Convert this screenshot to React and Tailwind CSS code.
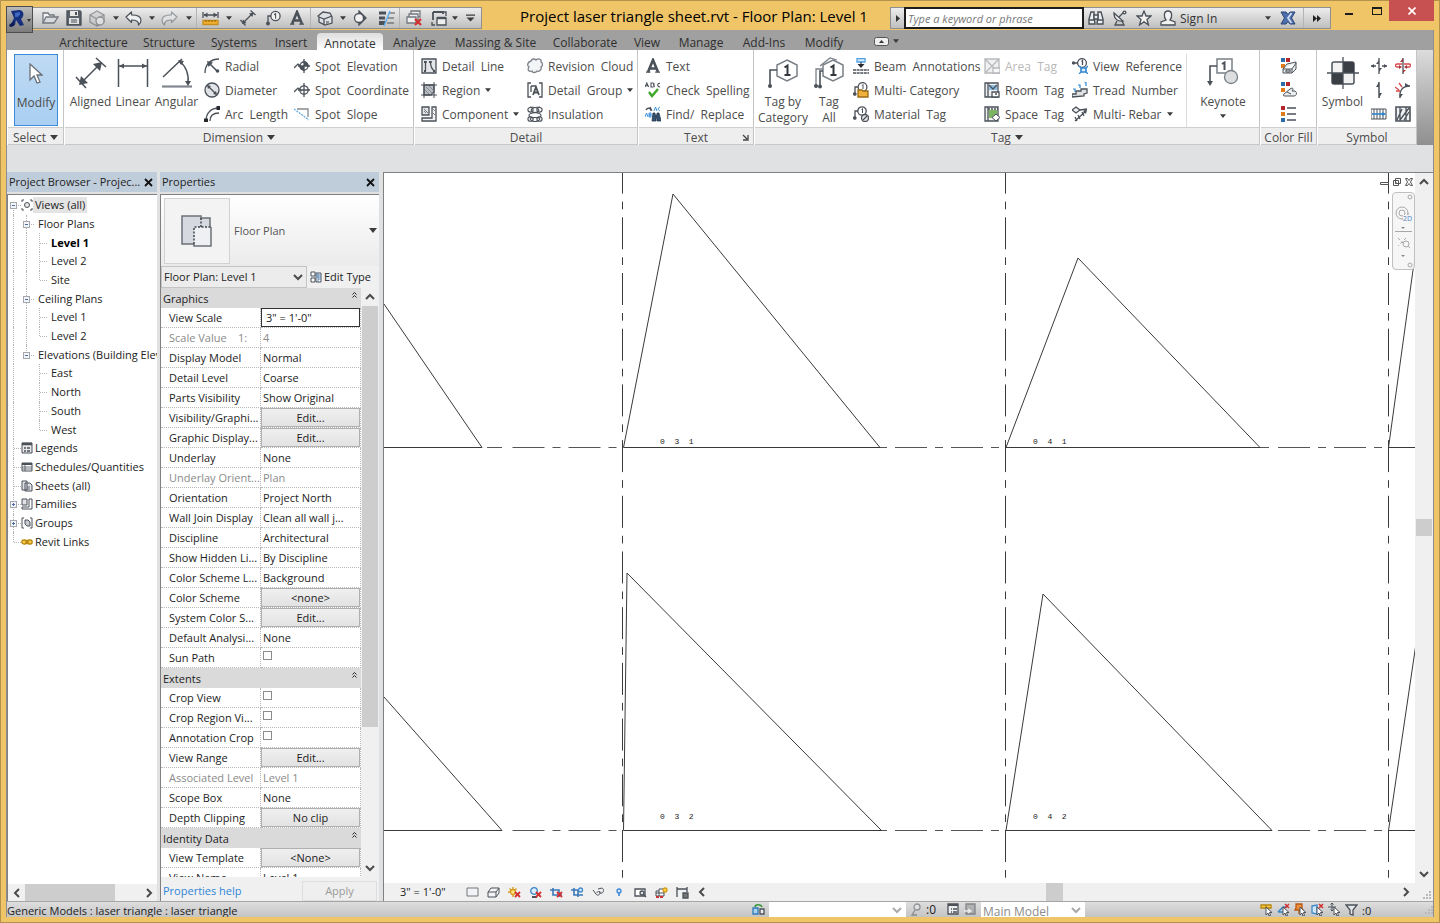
import React from "react";

const INK = "#4b5159";

function Icon({ size = 16, box = 16, children, className = "" }) {
  return (
    <svg width={size} height={size} viewBox={`0 0 ${box} ${box}`} fill="none" stroke={INK} strokeWidth="1.3" className={`shrink-0 ${className}`} aria-hidden="true">
      {children}
    </svg>
  );
}

const Caret = ({ big }) => (
  <svg width={big ? 8 : 6} height={big ? 5 : 4} viewBox="0 0 8 5" className="shrink-0" aria-hidden="true">
    <path d="M0 0h8L4 5z" fill="#3c3c3c" />
  </svg>
);

const CHEVRONS = { up: "M1 7l4-4 4 4", down: "M1 3l4 4 4-4", left: "M7 1L3 5l4 4", right: "M3 1l4 4-4 4" };
const Chevron = ({ dir, color = "#4a4a4a" }) => (
  <svg width="10" height="10" viewBox="0 0 10 10" fill="none" stroke={color} strokeWidth="2" className="shrink-0" aria-hidden="true">
    <path d={CHEVRONS[dir]} />
  </svg>
);

/* ---------- quick access icons ---------- */

const OpenIcon = () => (
  <Icon size={18} box={18}>
    <path d="M2 14V4h5l1.500 2H13v2" fill="#f4f4f4" stroke="#73787f" />
    <path d="M2 14L5 8h12l-4 6z" fill="#d8dadd" stroke="#73787f" />
  </Icon>
);
const SaveIcon = () => (
  <Icon>
    <path d="M1 1h13l1 1v13H1z" fill="#5a6068" />
    <path d="M4 1h8v5H4z" fill="#e8e8e8" stroke="none" />
    <path d="M9 2h2v3H9z" fill="#4b5159" stroke="none" />
    <path d="M3 8h10v6H3z" fill="#dfe1e4" stroke="none" />
    <path d="M5 10h6M5 12h6" strokeWidth="1" />
  </Icon>
);
const SyncIcon = () => (
  <Icon size={17} box={17} className="opacity-50">
    <path d="M1 5l7-4 7 4v7l-7 4-7-4z" fill="#ccc" />
    <path d="M1 5l7 4 7-4M8 9v7" />
    <circle cx="11" cy="11" r="4" fill="#eee" />
  </Icon>
);
const UndoIcon = ({ redo }) => (
  <svg width="17" height="15" viewBox="0 0 17 15" aria-hidden="true" className={redo ? "opacity-45 -scale-x-100" : ""}>
    <path d="M1 6L6.500 1v2.800c6 0 9.500 1.700 9.500 5.700 0 2-1 3-2.500 4.500.5-3.500-2-5-7-5V11.500z" fill="#eef0f2" stroke={INK} strokeWidth="1.200" strokeLinejoin="round" />
  </svg>
);
const MeasureIcon = () => (
  <Icon size={17} box={17}>
    <path d="M1 2v6M16 2v6M2 5h13" />
    <path d="M1.500 5l4-2.500v5zM15.500 5l-4-2.500v5z" fill={INK} stroke="none" />
    <path d="M1 10.500h15v4H1z" fill="#f0b030" stroke="#c98e1c" />
    <path d="M4 10v2M7 10v2M10 10v2M13 10v2" stroke="#8a5c0c" strokeWidth="1" />
  </Icon>
);
const AlignedIcon = ({ size = 16 }) => (
  <svg width={size} height={size} viewBox="0 0 32 32" fill="none" stroke={INK} strokeWidth={size > 20 ? 1.5 : 2.6} className="shrink-0" aria-hidden="true">
    <path d="M6 26L25 7M1 20l10 11M21 1l10 9" />
    <path d="M4 28l2-9 7 7zM27 5l-9 2 7 7z" fill={INK} stroke="none" />
  </svg>
);
const TagSmallIcon = () => (
  <Icon>
    <circle cx="10.500" cy="6" r="4.600" fill="#f4f4f4" />
    <path d="M6 6H3v7" />
    <circle cx="3" cy="13.500" r="1.300" fill={INK} />
    <path d="M9 4.800l1.600-1v5" strokeWidth="1.100" />
  </Icon>
);
const LetterA = ({ size = 16 }) => (
  <Icon size={size}>
    <path d="M3 14L8 2l5 12M4.600 10.500h6.800" strokeWidth="2.600" />
    <path d="M1 14.200h4.400M10.200 14.200H15" strokeWidth="1.300" />
  </Icon>
);
const HouseIcon = () => (
  <Icon>
    <path d="M1 6l5-4 7 1 2 4v6l-7 2-6-3V7z" fill="#dfe1e4" />
    <path d="M2 7l5 2 8-3M7 9v6" />
    <path d="M9 11h3v3H9z" fill="#8b9097" stroke="none" />
  </Icon>
);
const SectionIcon = () => (
  <Icon>
    <path d="M7 1v14l7-7z" fill={INK} />
    <circle cx="7" cy="8" r="4.500" fill="#f2f2f2" />
  </Icon>
);
const ThinLinesIcon = () => (
  <Icon size={17} box={17}>
    <path d="M1 3h7M1 8h6" strokeWidth="3" />
    <path d="M1 13h6" strokeWidth="4" />
    <path d="M11 3h6M10 8h6M9 13h7" strokeWidth="1" />
    <path d="M12 1L6 16" stroke="#5aa9ea" strokeWidth="1.400" />
  </Icon>
);
const CloseViewsIcon = () => (
  <Icon>
    <path d="M5 1h9v6H5z" fill="#eee" stroke="#73787f" />
    <path d="M3 4h9v6H3z" fill="#eee" stroke="#73787f" />
    <path d="M1 7h9v6H1z" fill="#eee" stroke="#73787f" />
    <path d="M9 9l6 6M15 9l-6 6" stroke="#d22f2f" strokeWidth="2.200" />
  </Icon>
);
const SwitchIcon = () => (
  <Icon size={17} box={17}>
    <path d="M2 2h10v2M2 2v8" strokeWidth="1.800" />
    <path d="M6 8h9v7H6z" fill="#eee" />
    <path d="M6 8h9" strokeWidth="2.400" />
    <path d="M15 6V2h-2M1 12v3h3" />
  </Icon>
);
const BinocularsIcon = () => (
  <Icon>
    <path d="M3 2h3v4l1 8H1V9zM13 2h-3v4l-1 8h6V9z" fill="#eef0f2" strokeWidth="1.400" />
    <path d="M6 5h4v4H6zM1 10h6M9 10h6" fill="#eef0f2" strokeWidth="1.400" />
  </Icon>
);
const DishIcon = () => (
  <Icon>
    <path d="M2 3c0 6 4 9 9 8z" fill="#eee" />
    <path d="M7 7l5-5M5 11l-2 4h9l-2-4" />
    <circle cx="12.500" cy="2.500" r="1.400" fill="#eee" />
  </Icon>
);
const StarIcon = () => (
  <Icon>
    <path d="M8 1l2 5h5l-4 3.500 1.500 5.500L8 11.800l-4.500 3.200L5 9.500 1 6h5z" fill="#f2f2f2" />
  </Icon>
);
const PersonIcon = () => (
  <Icon>
    <path d="M8 1c5 0 4 7 2 9l5 2v3H1v-3l5-2C4 8 3 1 8 1z" fill="#f2f2f2" />
  </Icon>
);
const ExchangeIcon = () => (
  <Icon>
    <path d="M1 2h5l2 2.500L10 2h5l-3.500 6 3.500 6h-5l-2-2.500L6 14H1l3.500-6z" fill="#4d6fae" stroke="#2a4474" strokeWidth="1" />
    <path d="M11.500 3L8 8l3.500 5" stroke="#cfdcf2" strokeWidth="1.800" />
  </Icon>
);

/* ---------- ribbon icons ---------- */

const LinearIcon = () => (
  <Icon size={32} box={32}>
    <path d="M1.500 2v28M30.500 2v28M2 9h28" strokeWidth="1.500" />
    <path d="M2 9l5-2.500v5zM30 9l-5-2.500v5z" fill={INK} stroke="none" />
  </Icon>
);
const AngularIcon = () => (
  <Icon size={32} box={32}>
    <path d="M2 20L21 2M18 4c7 5 10 13 9 23" strokeWidth="1.500" />
    <path d="M1 29.500h30" strokeWidth="2.200" stroke="#80868d" />
    <path d="M17 3l6 1-3 4zM27 29l-3-5h6z" fill={INK} stroke="none" />
  </Icon>
);
const RadialIcon = () => (
  <Icon><path d="M1 15C1 7 6 1 15 1" /><path d="M5 5l8 8" strokeWidth="1.600" /><path d="M3 3l6 1.500L4.500 9z" fill={INK} stroke="none" /><circle cx="13.500" cy="13" r="1.800" fill={INK} stroke="none" /></Icon>
);
const DiameterIcon = () => (
  <Icon><circle cx="8" cy="8" r="7" fill="#e2e3e6" /><path d="M4 4l8 8" /><path d="M3 3l4 1-3 3zM13 13l-4-1 3-3z" fill={INK} stroke="none" /></Icon>
);
const ArcIcon = () => (
  <Icon><path d="M2 15C2 7 7 2 15 2M6 15c0-5 3-8 9-8" /><path d="M0 12.500h4v3.500H0zM12.500 0H16v4h-3.500z" fill="#26292d" stroke="none" /></Icon>
);
const SpotElevIcon = () => (
  <Icon><path d="M0 10l4-4 4 3M10 1v14M4 8h12" /><circle cx="10" cy="8" r="4" fill="#fff" /><path d="M10 4a4 4 0 014 4h-4zM10 12a4 4 0 01-4-4h4z" fill={INK} stroke={INK} /></Icon>
);
const SpotCoordIcon = () => (
  <Icon><path d="M0 10l4-4 4 3M10 1v14M4 8h12" /><circle cx="10" cy="8" r="4.200" /></Icon>
);
const SlopeIcon = () => (
  <Icon><path d="M3 3h11v8" stroke="#848a90" /><path d="M0 3l15 11" stroke="#67a8dc" strokeDasharray="2 1" /></Icon>
);
const DetailLineIcon = () => (
  <Icon><path d="M1 1h14v14H1z" fill="#e3e5e8" /><path d="M3 4h3M4.500 4v9M8 4h3M9.500 4c0 5 1 7 4 9" /><path d="M3 3h2v2H3zM3 12h2v2H3zM8 3h2v2H8zM12 12h2v2h-2z" fill={INK} stroke="none" /></Icon>
);
const RegionIcon = () => (
  <Icon><path d="M3 3h10v7l-3 3H3z" fill="#b9bdc2" /><path d="M0 3h16M3 0v16M13 0v16M0 13h16" strokeWidth="1" /><path d="M5 5l7 7M8 4l5 5M4 8l4 4" stroke="#777d84" strokeWidth=".8" /></Icon>
);
const ComponentIcon = () => (
  <Icon><path d="M1 1h7v8H1z" fill="#e1e3e6" /><path d="M11 1h4v14H1v-3h10z" fill="#f4f4f4" /><path d="M3 3l4 4M3 5l2 2M12 3l2 2M12 7l2 2" strokeWidth=".7" /></Icon>
);
const CloudIcon = () => (
  <Icon><path d="M4 3c1-3 4-2 5-1 2-2 6-1 5 2 2 1 2 4 0 5 1 3-2 5-4 4-1 2-5 2-5 0-3 1-5-1-3-4-2-1-2-5 2-6z" fill="#f3f4f5" stroke="#7c828a" /></Icon>
);
const GroupIcon = () => (
  <Icon><path d="M4 1H1v14h3M12 1h3v14h-3M4 4h5M4 4v6" /><path d="M6 13l3-8 3 8M7.300 10.500H11" strokeWidth="1.800" /></Icon>
);
const InsulationIcon = () => (
  <Icon>
    <path d="M3 1c9 0 12 4.500 5 5.500-8 1-8 5 0 5s5 4-2 4M13 1C4 1 1 5.500 8 6.500c8 1 8 5 0 5s-5 4 2 4" strokeWidth="1.100" />
    <ellipse cx="3.500" cy="3.800" rx="2.600" ry="2.300" strokeWidth="1.100" /><ellipse cx="12.500" cy="3.800" rx="2.600" ry="2.300" strokeWidth="1.100" />
    <ellipse cx="3.500" cy="13" rx="2.600" ry="2.300" strokeWidth="1.100" /><ellipse cx="12.500" cy="13" rx="2.600" ry="2.300" strokeWidth="1.100" />
  </Icon>
);
const CheckIcon = () => (
  <Icon><path d="M0 5l1.800-4 1.800 4M.8 3.800h2M6 1v4h2c2 0 1.500-2 0-2 1.500 0 1.500-2 0-2zM15 1.500c-3-1-3 4 0 3.300" strokeWidth="1.100" /><path d="M4 10l3 4 6-7" stroke="#3fa52b" strokeWidth="2.400" /></Icon>
);
const FindIcon = () => (
  <Icon><path d="M1 4c1-2 3-2 5-1l-1-2M5 4h2" /><path d="M9 5l1.500-4L12 5M15 1.500c-2-1-2.500 3.500 0 3M0 11l1.500-4L3 11M4 7v4h2V9H4h2V7z" stroke="#3a8fdb" strokeWidth="1" /><path d="M8 7h2v2h2V7h2l2 8h-4v-3h-1v3H7z" fill="#34506f" stroke="#24384f" strokeWidth=".8" /></Icon>
);
const Hexagon = ({ shadow }) => (
  <Icon size={32} box={32}>
    {shadow && <path d="M7 9L17 1l7 2M3 28V12h8M3 12v0" stroke="#7a8087" />}
    <path d="M20 3l10 5v11l-10 5-10-5V8z" fill="#fff" stroke="#7a8087" strokeWidth="1.500" />
    <path d={shadow ? "M10 14H7v14" : "M10 13H3v16"} strokeWidth="1.600" />
    <circle cx="3" cy="29" r="2" fill={INK} stroke="none" />
    {shadow && <circle cx="7" cy="29.500" r="2" fill={INK} stroke="none" />}
    <path d="M17.500 10.500l3-2V18M17.500 18h6" strokeWidth="2" stroke="#33383e" />
  </Icon>
);
const BeamIcon = () => (
  <Icon><path d="M4 .7h8v3.300H4z" stroke="#4ea0e6" fill="#d7ebfb" /><path d="M8 4v5" /><path d="M4.500 6h7L8 10z" fill="#26292d" stroke="none" /><path d="M0 12h16M0 15h16" strokeWidth="1.600" strokeDasharray="3 .6" /></Icon>
);
const MultiCatIcon = () => (
  <Icon><circle cx="9.500" cy="5" r="4.400" fill="#fff" /><path d="M5 5H2v7" /><circle cx="1.800" cy="12" r="1.200" fill={INK} /><path d="M9 3.500l1-1V7" strokeWidth="1" /><path d="M5 8h4l1 1h5v6H5z" fill="#f0b23c" stroke="#9a6a14" /></Icon>
);
const MaterialIcon = () => (
  <Icon><circle cx="9" cy="5" r="4.200" fill="#fff" /><path d="M5 5H2v7" /><circle cx="1.800" cy="12" r="1.200" fill={INK} /><path d="M8.500 3.500l1-1V7" strokeWidth="1" /><circle cx="12" cy="12" r="3.500" fill="#e8e8e8" /><path d="M10 14l4-4" /></Icon>
);
const AreaTagIcon = () => (
  <Icon className="opacity-40"><path d="M1 1h14v14H1z" fill="#ddd" /><path d="M1 1l14 14M15 1L1 15" /><path d="M9 10h7v5H9z" fill="#eee" /></Icon>
);
const RoomTagIcon = () => (
  <Icon><path d="M1 1h13v14H1zM4 1v14" fill="#eef0f2" /><path d="M5 3h8v5H5z" fill="#8cc0e8" stroke="none" /><path d="M5 3l4 4 4-4" /><path d="M8 10h7v5H8z" fill="#fff" /><path d="M11 12h2" /></Icon>
);
const SpaceTagIcon = () => (
  <Icon><path d="M1 1h13v14H1zM4 1v14" fill="#f0f2ef" /><path d="M5 4h8v8H5z" fill="#7cb661" stroke="none" /><path d="M4 3h10" strokeDasharray="2 1" /><path d="M12 8l4 3.500-4 3.500-4-3.500z" fill="#fff" strokeWidth="1" /></Icon>
);
const ViewRefIcon = () => (
  <Icon><circle cx="10" cy="5" r="4.400" fill="#fff" /><path d="M0 5h6M9.500 3.500l1-1V7" /><circle cx="1.500" cy="5" r="1" fill={INK} /><path d="M9 10h5v4H9z" stroke="#3187d2" fill="#dceefb" strokeWidth="1.600" /><path d="M7 8l2 2M16 8l-2 2M7 16l2-2M16 16l-2-2" stroke="#3187d2" /></Icon>
);
const TreadIcon = () => (
  <Icon><path d="M0 15v-3h4V9h5V7h6v4l-3 1v2z" fill="#e1e3e6" /><path d="M1 7h2v3M6 3h2v3M12 0h2v4" stroke="#3187d2" strokeWidth="1.200" /></Icon>
);
const RebarIcon = () => (
  <Icon><path d="M4 1l4 3-4 3-4-3z" fill="#eee" /><path d="M3 15L14 5M3 11l2 4M6 9l2 4M10 6l2 4M8 4l7-1" /><path d="M15 3l-4 2 3 3z" fill={INK} stroke="none" /></Icon>
);
const KeynoteIcon = () => (
  <Icon size={32} box={32}>
    <path d="M10 2h15v14H10z" fill="#fff" stroke="#7a8087" strokeWidth="1.500" /><path d="M10 9H3v18" strokeWidth="1.600" /><path d="M0 24h6l-3 5z" fill={INK} stroke="none" /><path d="M15 7l2.500-1.500V13" strokeWidth="2" /><circle cx="24" cy="20" r="6.500" fill="#dcdee0" stroke="#7a8087" />
  </Icon>
);
const Squares = ({ kind }) => (
  <Icon>
    <path d="M0 0h4v4H0z" fill={kind === "legend" ? "#b3262c" : "#2c6da8"} stroke="none" />
    {kind !== "legend" && <path d="M5 0h4v4H5z" fill="#b3262c" stroke="none" />}
    <path d="M0 6h4v4H0z" fill="#e07b1c" stroke="none" />
    {kind === "legend" && <><path d="M0 12h4v4H0z" fill="#2c6da8" stroke="none" /><path d="M6 2h9M6 8h9M6 14h9" /></>}
    {kind === "duct" && <path d="M2 11l4-5 9-2v7l-4 4H2zM2 11h9l4-6M11 11v4M5 12h4v2H5z" fill="#eceef0" strokeWidth="1" />}
    {kind === "pipe" && <path d="M3 12l6-5c3-2 4 0 2 2h3c3 2 1 5-1 5H4c-2 0-2-1-1-2zM6 10l4 2" fill="#eceef0" strokeWidth="1" />}
  </Icon>
);
const SymbolIcon = () => (
  <Icon size={32} box={32}>
    <rect x="5" y="5" width="22" height="22" rx="2" fill="#f2f2f2" strokeWidth="1.500" />
    <path d="M16 5h9a2 2 0 012 2v9H16zM5 16h11v11H7a2 2 0 01-2-2z" fill="#3a3f46" stroke="none" />
    <path d="M16 0v32M0 16h32" strokeWidth="1.300" />
  </Icon>
);
const SpanIcon = () => (
  <Icon><path d="M8 0v16M0 8h5M11 8h5" /><path d="M0 8l3-2v4zM16 8l-3-2v4zM8 2l-3 4h3zM8 14l3-4H8z" fill={INK} stroke="none" /></Icon>
);
const RedSpanIcon = () => (
  <Icon><path d="M8 0v16" /><path d="M7 6H2c-2 0-2 3 0 3h3M9 6h5c2 0 2 3 0 3h-3" stroke="#d8474b" /><path d="M4 7v4l3-2zM12 7v4l-3-2zM8 0L5 4h3zM8 15l3-3H8z" fill="#a33a3e" stroke="none" /></Icon>
);
const ArrowUpDownIcon = () => (
  <Icon><path d="M8 0v16" strokeWidth="1.500" /><path d="M8 0L5 5h3zM8 16l3-5H8z" fill={INK} stroke="none" /></Icon>
);
const BentIcon = () => (
  <Icon><path d="M5 16c-1-7 2-12 10-12" /><path d="M10 1l5 3h-5zM5 16l3-4H5z" fill={INK} stroke="none" /><path d="M0 5l4 3M4 1l3 4M1 9h4" stroke="#d8474b" /></Icon>
);
const PathIcon = () => (
  <Icon><path d="M0 3h15v10H0zM3 3v10M6 3v10M9 3v10M12 3v10" strokeWidth="1" /><path d="M1 8h13" stroke="#2e82cc" strokeWidth="1.600" /><path d="M15 8l-4-2v4z" fill="#2e82cc" stroke="none" /></Icon>
);
const FabricIcon = () => (
  <Icon><path d="M1 1h14v14H1z" fill="#eef0f2" strokeWidth="1.600" /><path d="M5 1v14M11 1v14M2 14L7 3M5 14L14 2M9 14l5-8" /></Icon>
);
const CursorIcon = () => (
  <svg width="14" height="22" viewBox="0 0 14 22" aria-hidden="true">
    <path d="M1 1v16l4-4 3 7 3-1-3-7h5z" fill="#fff" stroke="#6a7076" strokeWidth="1.300" />
  </svg>
);

/* ---------- ribbon ---------- */

const TABS = [
  ["Architecture", "w-[83px]"], ["Structure", "w-[68px]"], ["Systems", "w-[62px]"], ["Insert", "w-[52px]"],
  ["Annotate", "w-[66px]"], ["Analyze", "w-[63px]"], ["Massing & Site", "w-[99px]"], ["Collaborate", "w-[80px]"],
  ["View", "w-[44px]"], ["Manage", "w-[64px]"], ["Add-Ins", "w-[62px]"], ["Modify", "w-[58px]"],
];

function Panel({ title, width, caret, launcher, children }) {
  return (
    <section className={`flex shrink-0 flex-col border-l border-r border-l-white border-r-[#c4c5c6] bg-white ${width}`} aria-label={title}>
      <div className="flex h-[77px] pt-1">{children}</div>
      <div className="relative flex h-[18px] items-center justify-center gap-1 border-t border-b border-t-[#cfcfcf] border-b-[#c8c8c8] bg-[#eeeeee] pt-[3px] text-[#4c4c4c]">
        {title}
        {caret && <Caret big />}
        {launcher && (
          <button className="absolute right-1" aria-label="Text types">
            <svg width="7" height="7" viewBox="0 0 7 7" fill="none" stroke="#444" strokeWidth="1.300" aria-hidden="true"><path d="M1 1l4 4M6 1v5H1" /></svg>
          </button>
        )}
      </div>
    </section>
  );
}

function Col({ className = "", children }) {
  return <div className={`flex shrink-0 flex-col ${className}`}>{children}</div>;
}

function Small({ icon, label, caret, disabled }) {
  return (
    <button disabled={disabled} className={`flex h-6 items-center gap-[5px] whitespace-pre ${disabled ? "text-[#b9b9b9]" : "text-[#4c4c4c]"}`}>
      {icon}
      {label && <span className="pt-px">{label}</span>}
      {caret && <Caret />}
    </button>
  );
}

function Big({ icon, lines, width, caret }) {
  return (
    <button className={`flex shrink-0 flex-col items-center pt-[3px] text-[#4c4c4c] ${width}`}>
      {icon}
      <span className="flex flex-col items-center pt-[5px] leading-4 whitespace-nowrap">
        {lines.map((l) => <span key={l}>{l}</span>)}
      </span>
      {caret && <span className="pt-1"><Caret /></span>}
    </button>
  );
}

function QButton({ label, width, children }) {
  return <button aria-label={label} className={`flex h-full shrink-0 items-center justify-center ${width}`}>{children}</button>;
}

const QSep = () => <span className="h-full w-px shrink-0 bg-[#b4b4b4]" />;

function TitleBar() {
  return (
    <header className="flex h-[30px] shrink-0 items-start">
      <button aria-label="Application menu" className="relative z-10 mt-[6px] flex h-[27px] w-[27px] shrink-0 items-center justify-center border border-[#4d4d4d] bg-linear-to-b from-[#b9b9b9] to-[#7c7c7c]">
        <svg width="25" height="24" viewBox="0 0 25 24" aria-hidden="true">
          <path d="M4 3l8-1c5 0 6 6 2 9l3 6-4 1-4-6-1 5-5 2 4-9z" fill="#16307e" />
          <path d="M8 5l4-1c2 1 1 4-2 5H8z" fill="#3f67c0" />
          <path d="M2 17l5-4v5l-4 1z" fill="#0b1c52" />
          <path d="M20 11h4l-2 3z" fill="#333" />
        </svg>
      </button>
      <div className="mt-[7px] flex h-[22px] w-[449px] shrink-0 items-center border border-l-0 border-[#8f8f8f] bg-linear-to-b from-[#ededed] to-[#bfbfbf] pl-1">
        <QButton label="Open" width="w-[25px]"><OpenIcon /></QButton>
        <QButton label="Save" width="w-[24px]"><SaveIcon /></QButton>
        <QButton label="Synchronize" width="w-[23px]"><SyncIcon /></QButton>
        <QButton label="Synchronize options" width="w-[13px]"><Caret /></QButton>
        <QButton label="Undo" width="w-[23px]"><UndoIcon /></QButton>
        <QButton label="Undo list" width="w-[13px]"><Caret /></QButton>
        <QButton label="Redo" width="w-[23px]"><UndoIcon redo /></QButton>
        <QButton label="Redo list" width="w-[15px]"><Caret /></QButton>
        <QSep />
        <QButton label="Measure" width="w-[27px]"><MeasureIcon /></QButton>
        <QButton label="Measure options" width="w-[10px]"><Caret /></QButton>
        <QButton label="Aligned dimension" width="w-[27px]"><AlignedIcon /></QButton>
        <QButton label="Tag by category" width="w-[24px]"><TagSmallIcon /></QButton>
        <QButton label="Text" width="w-[24px]"><LetterA /></QButton>
        <span className="w-1" />
        <QSep />
        <QButton label="Default 3D view" width="w-[28px]"><HouseIcon /></QButton>
        <QButton label="3D view options" width="w-[8px]"><Caret /></QButton>
        <QButton label="Section" width="w-[27px]"><SectionIcon /></QButton>
        <QButton label="Thin lines" width="w-[25px]"><ThinLinesIcon /></QButton>
        <span className="w-1" />
        <QSep />
        <QButton label="Close hidden windows" width="w-[27px]"><CloseViewsIcon /></QButton>
        <QButton label="Switch windows" width="w-[24px]"><SwitchIcon /></QButton>
        <QButton label="Window list" width="w-[8px]"><Caret /></QButton>
        <QButton label="Customize quick access" width="w-[22px]">
          <svg width="9" height="8" viewBox="0 0 9 8" aria-hidden="true"><path d="M0 .5h9v1.200H0zM.5 3.500h8l-4 4z" fill="#3c3c3c" /></svg>
        </QButton>
      </div>
      <h1 className="min-w-0 flex-1 truncate pt-[6px] pl-4 text-center text-[15px] leading-5 text-black">
        Project laser triangle sheet.rvt - Floor Plan: Level 1
      </h1>
      <div className="mt-[7px] flex h-[22px] w-[441px] shrink-0 items-center border border-[#8f8f8f] bg-linear-to-b from-[#ededed] to-[#bfbfbf]">
        <QButton label="Collapse search" width="w-[13px]">
          <svg width="4" height="7" viewBox="0 0 4 7" aria-hidden="true"><path d="M0 0l4 3.500L0 7z" fill="#333" /></svg>
        </QButton>
        <input aria-label="Search help" placeholder="Type a keyword or phrase" className="h-[22px] w-[180px] shrink-0 border-2 border-[#1c1c1c] bg-white px-[2px] text-[11px] italic placeholder:text-[#777777]" />
        <QButton label="Search" width="w-[24px]"><BinocularsIcon /></QButton>
        <QButton label="Communication center" width="w-[24px]"><DishIcon /></QButton>
        <QButton label="Favorites" width="w-[24px]"><StarIcon /></QButton>
        <button className="flex h-full w-[105px] shrink-0 items-center gap-1 pl-1 text-[#333]"><PersonIcon /><span className="pt-px">Sign In</span></button>
        <QButton label="Sign in options" width="w-[14px]"><Caret /></QButton>
        <QButton label="Exchange apps" width="w-[25px]"><ExchangeIcon /></QButton>
        <span className="w-1" />
        <QSep />
        <QButton label="More" width="w-[26px]">
          <svg width="8" height="7" viewBox="0 0 8 7" aria-hidden="true"><path d="M0 0l4 3.500L0 7zM4 0l4 3.500L4 7z" fill="#222" /></svg>
        </QButton>
      </div>
      <div className="flex h-[21px] shrink-0">
        <button aria-label="Minimize" className="flex w-[36px] items-center justify-center"><span className="mt-[7px] h-[2px] w-2 bg-[#1c1c1c]" /></button>
        <button aria-label="Maximize" className="flex w-[22px] items-center pt-px pl-[5px]"><span className="h-2 w-[10px] border border-t-2 border-[#1c1c1c]" /></button>
        <button aria-label="Close" className="flex w-[45px] items-center justify-center bg-[#c75050]">
          <svg width="8" height="8" viewBox="0 0 8 8" stroke="#fff" strokeWidth="1.600" aria-hidden="true"><path d="M.5.5l7 7M7.500.500l-7 7" /></svg>
        </button>
      </div>
    </header>
  );
}

function Ribbon() {
  return (
    <>
      <nav className="flex h-5 shrink-0 bg-[#a0a0a0] pl-[45px]">
        {TABS.map(([t, w]) => (
          <button key={t} className={`flex shrink-0 items-center justify-center whitespace-nowrap pt-[5px] ${w} ${t === "Annotate" ? "mt-[3px] rounded-t-sm bg-linear-to-b from-[#dedede] to-white pt-[2px] text-[#333]" : "text-[#2f2f2f]"}`}>{t}</button>
        ))}
        <button aria-label="Minimize ribbon" className="flex items-center gap-1 pt-[2px] pl-[21px]">
          <svg width="15" height="9" viewBox="0 0 15 9" aria-hidden="true"><rect x=".5" y=".5" width="14" height="8" rx="2" fill="#eee" stroke="#555" /><path d="M5 6h5L7.500 3z" fill="#333" /></svg>
          <Caret />
        </button>
      </nav>
      <div className="flex h-[95px] shrink-0 bg-white">
        <Panel title="Select" width="w-[57px]" caret>
          <button className="ml-[6px] flex h-[72px] w-11 flex-col items-center border border-[#3b8ade] bg-linear-to-b from-[#bfdaf3] to-[#a9cff2] pt-2 text-[#4c4c4c]">
            <CursorIcon />
            <span className="pt-[10px] leading-4">Modify</span>
          </button>
        </Panel>
        <Panel title="Dimension" width="w-[350px]" caret>
          <div className="flex pl-1">
            <Big icon={<AlignedIcon size={32} />} lines={["Aligned"]} width="w-[43px]" />
            <Big icon={<LinearIcon />} lines={["Linear"]} width="w-[42px]" />
            <Big icon={<AngularIcon />} lines={["Angular"]} width="w-[45px]" />
          </div>
          <Col className="w-[91px] pl-[5px]">
            <Small icon={<RadialIcon />} label="Radial" />
            <Small icon={<DiameterIcon />} label="Diameter" />
            <Small icon={<ArcIcon />} label="Arc  Length" />
          </Col>
          <Col className="pl-1">
            <Small icon={<SpotElevIcon />} label="Spot  Elevation" />
            <Small icon={<SpotCoordIcon />} label="Spot  Coordinate" />
            <Small icon={<SlopeIcon />} label="Spot  Slope" />
          </Col>
        </Panel>
        <Panel title="Detail" width="w-[224px]">
          <Col className="w-[112px] pl-[6px]">
            <Small icon={<DetailLineIcon />} label="Detail  Line" />
            <Small icon={<RegionIcon />} label="Region" caret />
            <Small icon={<ComponentIcon />} label="Component" caret />
          </Col>
          <Col>
            <Small icon={<CloudIcon />} label="Revision  Cloud" />
            <Small icon={<GroupIcon />} label="Detail  Group" caret />
            <Small icon={<InsulationIcon />} label="Insulation" />
          </Col>
        </Panel>
        <Panel title="Text" width="w-[116px]" launcher>
          <Col className="pl-[6px]">
            <Small icon={<LetterA />} label="Text" />
            <Small icon={<CheckIcon />} label="Check  Spelling" />
            <Small icon={<FindIcon />} label="Find/  Replace" />
          </Col>
        </Panel>
        <Panel title="Tag" width="w-[506px]" caret>
          <Big icon={<Hexagon />} lines={["Tag by", "Category"]} width="w-[56px]" />
          <Big icon={<Hexagon shadow />} lines={["Tag", "All"]} width="w-[36px]" />
          <Col className="w-[131px] pl-[6px]">
            <Small icon={<BeamIcon />} label="Beam  Annotations" />
            <Small icon={<MultiCatIcon />} label="Multi- Category" />
            <Small icon={<MaterialIcon />} label="Material  Tag" />
          </Col>
          <Col className="w-[88px] pl-[6px]">
            <Small icon={<AreaTagIcon />} label="Area  Tag" disabled />
            <Small icon={<RoomTagIcon />} label="Room  Tag" />
            <Small icon={<SpaceTagIcon />} label="Space  Tag" />
          </Col>
          <Col className="w-[121px] border-r border-[#dcdcdc] pl-[6px]">
            <Small icon={<ViewRefIcon />} label="View  Reference" />
            <Small icon={<TreadIcon />} label="Tread  Number" />
            <Small icon={<RebarIcon />} label="Multi- Rebar" caret />
          </Col>
          <Big icon={<KeynoteIcon />} lines={["Keynote"]} width="w-[72px]" caret />
        </Panel>
        <Panel title="Color Fill" width="w-[57px]">
          <Col className="w-full items-center">
            <Small icon={<Squares kind="duct" />} />
            <Small icon={<Squares kind="pipe" />} />
            <Small icon={<Squares kind="legend" />} />
          </Col>
        </Panel>
        <Panel title="Symbol" width="w-[100px]">
          <Big icon={<SymbolIcon />} lines={["Symbol"]} width="w-[49px]" />
          <div className="grid grid-cols-2 content-start gap-x-2 pl-1">
            <Small icon={<SpanIcon />} /><Small icon={<RedSpanIcon />} />
            <Small icon={<ArrowUpDownIcon />} /><Small icon={<BentIcon />} />
            <Small icon={<PathIcon />} /><Small icon={<FabricIcon />} />
          </div>
        </Panel>
        <div className="flex-1 bg-linear-to-b from-[#dcdcdc] to-[#8f8f8f]" />
      </div>
    </>
  );
}

/* ---------- project browser ---------- */

const TREE = [
  { t: "Views (all)", d: 0, box: "-", icon: "views", sel: true },
  { t: "Floor Plans", d: 1, box: "-" },
  { t: "Level 1", d: 2, bold: true }, { t: "Level 2", d: 2 }, { t: "Site", d: 2, last: true },
  { t: "Ceiling Plans", d: 1, box: "-" },
  { t: "Level 1", d: 2 }, { t: "Level 2", d: 2, last: true },
  { t: "Elevations (Building Elevation)", d: 1, box: "-", tail: true },
  { t: "East", d: 2, below: true }, { t: "North", d: 2, below: true }, { t: "South", d: 2, below: true }, { t: "West", d: 2, last: true, below: true },
  { t: "Legends", d: 0, icon: "legend" },
  { t: "Schedules/Quantities", d: 0, icon: "table" },
  { t: "Sheets (all)", d: 0, icon: "sheet" },
  { t: "Families", d: 0, box: "+", icon: "family" },
  { t: "Groups", d: 0, box: "+", icon: "group" },
  { t: "Revit Links", d: 0, icon: "link", last: true },
];

const TREE_ICONS = {
  views: <><path d="M3 1H1v2M9 1h2v2M1 9v2h2M11 9v2H9" strokeWidth="1" /><circle cx="6" cy="6" r="2.500" fill="#e8e8e8" strokeWidth="1" /></>,
  legend: <><path d="M1 1h10v10H1z" fill="#e8e8e8" strokeWidth="1" /><path d="M1 2h10" strokeWidth="2.500" /><path d="M3 6h2M6 6h3M3 9h2M6 9h3" strokeWidth="1.500" /></>,
  table: <><path d="M1 2h10v8H1z" fill="#fff" strokeWidth="1" /><path d="M1 3h10" strokeWidth="2" /><path d="M1 6h10M1 8h10M4 4v6" strokeWidth=".8" /></>,
  sheet: <><path d="M1 1h5v9H1zM4 3h5l2 2v6H4z" fill="#dfe2e6" strokeWidth="1" /><path d="M6 7h3M6 9h3" strokeWidth=".8" /></>,
  family: <><path d="M1 1h5v6H1z" fill="#e1e3e6" strokeWidth="1" /><path d="M8 1h3v10H1V9h7z" fill="#fff" strokeWidth="1" /></>,
  group: <><path d="M3 1H1v10h2M9 1h2v10H9" strokeWidth="1" /><path d="M4 3h3l2 2v4H6L4 7z" fill="#c7cacf" strokeWidth="1" /></>,
  link: <><rect x=".8" y="4" width="5" height="4" rx="2" fill="#f7cf4e" stroke="#b8860b" /><rect x="6.200" y="4" width="5" height="4" rx="2" fill="#f7cf4e" stroke="#b8860b" /><path d="M4 6h4" stroke="#b8860b" /></>,
};

function Guide({ line, half, tick, box }) {
  return (
    <span className="relative h-full w-[13px] shrink-0">
      {line && <span className={`absolute left-[5px] w-px border-l border-dotted border-[#b5b5b5] ${half === "top" ? "top-0 h-1/2" : half === "bottom" ? "top-1/2 h-1/2" : "inset-y-0"}`} />}
      {tick && <span className="absolute top-1/2 right-0 left-[6px] border-t border-dotted border-[#b5b5b5]" />}
      {box && (
        <svg width="7" height="7" viewBox="0 0 7 7" className="absolute top-1/2 left-[2px] -mt-[3px]" aria-hidden="true">
          <rect x=".5" y=".5" width="6" height="6" fill="#f3f5f8" stroke="#a4a8ae" />
          <path d={box === "+" ? "M2 3.500h3M3.500 2v3" : "M2 3.500h3"} stroke="#4a6ea8" />
        </svg>
      )}
    </span>
  );
}

function PanelHeader({ title }) {
  return (
    <div className="flex h-5 shrink-0 items-center justify-between bg-[#bfcddb] pr-1 pl-[2px] text-[#222]">
      <h2 className="whitespace-nowrap">{title}</h2>
      <button aria-label={`Close ${title}`}>
        <svg width="9" height="9" viewBox="0 0 9 9" stroke="#111" strokeWidth="1.800" aria-hidden="true"><path d="M1 1l7 7M8 1L1 8" /></svg>
      </button>
    </div>
  );
}

function Browser() {
  return (
    <aside className="flex w-[150px] shrink-0 flex-col text-[11px]">
      <PanelHeader title="Project Browser - Projec..." />
      <div className="mt-[2px] flex min-h-0 flex-1 flex-col border-t border-l border-[#808080] bg-white">
        <ul className="grid h-[356px] shrink-0 auto-rows-fr overflow-hidden pt-px">
          {TREE.map((n, i) => (
            <li key={i} className="flex items-center whitespace-nowrap text-[#222]">
              <Guide line half={i === 0 ? "bottom" : i === 18 ? "top" : ""} tick={n.d === 0} box={n.d === 0 && n.box} />
              {n.d > 0 && <Guide line={!n.below} half={n.tail ? "top" : ""} tick={n.d === 1} box={n.box} />}
              {n.d === 2 && <Guide line half={n.last ? "top" : ""} tick />}
              {n.icon && <Icon size={12} box={12}>{TREE_ICONS[n.icon]}</Icon>}
              <span className={`px-[2px] ${n.d > 0 ? "ml-[2px]" : ""} ${n.sel ? "bg-[#e4e4e4]" : ""} ${n.bold ? "font-bold text-black" : ""}`}>{n.t}</span>
            </li>
          ))}
        </ul>
        <div className="mt-auto flex h-[17px] items-center bg-[#f0f0f0]">
          <button aria-label="Scroll left" className="flex w-[17px] justify-center"><Chevron dir="left" /></button>
          <div className="h-full w-[90px] bg-[#cdcdcd]" />
          <button aria-label="Scroll right" className="ml-auto flex w-[17px] justify-center"><Chevron dir="right" /></button>
        </div>
      </div>
    </aside>
  );
}

/* ---------- properties ---------- */

const PROPS = [
  ["Graphics"],
  ["View Scale", "3\" = 1'-0\"", "input"],
  ["Scale Value    1:", "4", "off"],
  ["Display Model", "Normal"],
  ["Detail Level", "Coarse"],
  ["Parts Visibility", "Show Original"],
  ["Visibility/Graphi...", "Edit...", "btn"],
  ["Graphic Display...", "Edit...", "btn"],
  ["Underlay", "None"],
  ["Underlay Orient...", "Plan", "off"],
  ["Orientation", "Project North"],
  ["Wall Join Display", "Clean all wall j..."],
  ["Discipline", "Architectural"],
  ["Show Hidden Li...", "By Discipline"],
  ["Color Scheme L...", "Background"],
  ["Color Scheme", "<none>", "btn"],
  ["System Color S...", "Edit...", "btn"],
  ["Default Analysi...", "None"],
  ["Sun Path", "", "check"],
  ["Extents"],
  ["Crop View", "", "check"],
  ["Crop Region Vi...", "", "check"],
  ["Annotation Crop", "", "check"],
  ["View Range", "Edit...", "btn"],
  ["Associated Level", "Level 1", "off"],
  ["Scope Box", "None"],
  ["Depth Clipping", "No clip", "btn"],
  ["Identity Data"],
  ["View Template", "<None>", "btn"],
  ["View Name", "Level 1"],
];

function PropRow({ row: [name, value, kind] }) {
  if (value === undefined) {
    return (
      <tr className="h-5 bg-[#dadada]">
        <th colSpan={2} className="p-0 text-left font-normal">
          <div className="flex h-5 items-center justify-between pt-px pr-1 pl-[2px] text-[#222]">
            {name}
            <button aria-label={`Collapse ${name}`} className="mb-2">
              <svg width="5" height="6" viewBox="0 0 5 6" fill="none" stroke="#222" aria-hidden="true"><path d="M.5 2.500l2-2 2 2M.5 5.500l2-2 2 2" /></svg>
            </button>
          </div>
        </th>
      </tr>
    );
  }
  const off = kind === "off";
  return (
    <tr className={`h-5 ${off ? "text-[#8a8a8a]" : "text-[#222]"}`}>
      <th className="h-5 border-r border-b border-dotted border-[#b8b8b8] p-0 pl-2 text-left font-normal whitespace-pre">
        <span className="block h-[19px] leading-[19px]">{name}</span>
      </th>
      <td className="h-5 border-r border-b border-dotted border-[#b8b8b8] p-0">
        <div className="flex h-[19px] items-center whitespace-nowrap">
          {kind === "btn" && <button className="h-[19px] w-full border border-[#b0b0b0] bg-linear-to-b from-[#f0f0f0] to-[#e2e2e2] leading-[17px]">{value}</button>}
          {kind === "check" && <input type="checkbox" aria-label={name} className="mb-1 ml-[2px] size-[9px] appearance-none border border-[#8c8c8c] bg-white" />}
          {kind === "input" && <input aria-label={name} defaultValue={value} className="h-[19px] w-full border border-[#333] bg-white px-1" />}
          {(!kind || off) && <span className="pl-[2px]">{value}</span>}
        </div>
      </td>
    </tr>
  );
}

function Properties() {
  return (
    <aside className="ml-[3px] flex w-[219px] shrink-0 flex-col text-[11px]">
      <PanelHeader title="Properties" />
      <div className="mt-[2px] flex min-h-0 flex-1 flex-col border-t border-l border-[#808080] bg-[#f0f0f0]">
        <button className="flex h-[71px] shrink-0 items-center bg-linear-to-b from-white to-[#ebebeb] pr-[2px] pl-[3px] text-[#555]">
          <span className="flex h-[66px] w-[66px] items-center justify-center border border-[#d2d2d2] bg-[#f3f3f3]">
            <svg width="32" height="32" viewBox="0 0 32 32" fill="none" stroke="#6c7178" strokeWidth="1.500" aria-hidden="true">
              <path d="M1 1h19v2h9v27H13v-1H1z" fill="#d6d9df" />
              <path d="M13 12h17v19H13z" fill="#eef0f3" stroke="none" />
              <path d="M13 29v2h17V12" />
              <path d="M13 29V12h17M20 3v9" strokeDasharray="2 1.500" stroke="#3e434a" />
            </svg>
          </span>
          <span className="pl-1">Floor Plan</span>
          <span className="ml-auto"><Caret big /></span>
        </button>
        <div className="flex h-[22px] shrink-0 items-center">
          <span className="relative flex w-[146px] items-center">
            <select aria-label="Instance" className="h-[22px] w-full appearance-none border border-[#c4c4c4] bg-[#ececec] px-[2px] text-[#222]">
              <option>Floor Plan: Level 1</option>
            </select>
            <span className="pointer-events-none absolute right-1"><Chevron dir="down" /></span>
          </span>
          <button className="ml-[3px] flex items-center gap-[2px] text-[#222]">
            <Icon size={12} box={12}><path d="M1 1h4v4H1zM1 7h4v4H1zM6 2h5v9H6z" fill="#fff" strokeWidth="1" /><path d="M6 4h5M6 6h5M8 8h3M8 2v9" stroke="#5c83b5" strokeWidth="1" /></Icon>
            Edit Type
          </button>
        </div>
        <div className="flex min-h-0 flex-1 overflow-hidden">
          <div className="w-[200px] shrink-0 overflow-hidden bg-white">
            <table className="w-full table-fixed border-separate border-spacing-0">
              <tbody>{PROPS.map((r, i) => <PropRow key={i} row={r} />)}</tbody>
            </table>
          </div>
          <div className="flex flex-1 flex-col items-center">
            <button aria-label="Scroll up" className="flex h-[18px] items-center"><Chevron dir="up" /></button>
            <div className="h-[421px] w-4 bg-[#cdcdcd]" />
            <button aria-label="Scroll down" className="mt-auto flex h-[18px] items-center"><Chevron dir="down" /></button>
          </div>
        </div>
        <div className="flex h-6 shrink-0 items-center justify-between pt-1 pr-[2px] pl-[2px]">
          <a href="#help" className="text-[#2f86d8]">Properties help</a>
          <button disabled className="h-5 w-[75px] border border-[#dedede] bg-[#efefef] text-[#9a9a9a]">Apply</button>
        </div>
      </div>
    </aside>
  );
}

/* ---------- drawing area ---------- */

const TRIANGLES = [
  "384,304 482,447.500", "623.500,447.500 673,194 880,447.500", "1006,447.500 1078,258 1260,447.500", "1388.500,447.500 1415.500,252",
  "384,697 502,830.500", "623.500,830.500 627,573 881.500,830.500", "1006,830.500 1043,594 1272,830.500", "1388.500,830.500 1415.500,647",
];
const SOLID = ["M384 447.500h98", "M623.500 447.500H880", "M1006 447.500h254", "M1388.500 447.500h60", "M384 830.500h118", "M623.500 830.500h258", "M1006 830.500h266", "M1388.500 830.500h60"];
const DASHED_V = [622.5, 1005.5, 1388.5];
const DASHED_H = [["M512.500 447.500H623", "M487 447.500h15"], ["M895 447.500h110", "M880 447.500h7"], ["M1278 447.500h110", "M1260 447.500h9"], ["M512.500 830.500H623", ""], ["M895 830.500h110", "M881 830.500h6"], ["M1278 830.500h110", ""]];
const NUMBERS = [[660, 444, "0  3  1"], [1033, 444, "0  4  1"], [660, 819, "0  3  2"], [1033, 819, "0  4  2"]];

function Canvas() {
  return (
    <svg className="absolute inset-0 h-full w-full" role="img" aria-label="Floor plan drawing">
      <g transform="translate(-384 -173)" fill="none" stroke="#3a3a3a" strokeWidth="1">
        {DASHED_V.map((x) => <path key={x} d={`M${x} 161.600V880`} strokeDasharray="32 8 7.700 8" />)}
        {DASHED_H.map(([a, b], i) => <g key={i} stroke="#555"><path d={a} strokeDasharray="32 8 8 8" /><path d={b} /></g>)}
        {SOLID.map((d) => <path key={d} d={d} />)}
        {TRIANGLES.map((p) => <polyline key={p} points={p} />)}
        {NUMBERS.map(([x, y, t]) => (
          <text key={t} x={x} y={y} fill="#222" stroke="none" xmlSpace="preserve" className="font-['Liberation_Mono',monospace] text-[8px] whitespace-pre">{t}</text>
        ))}
      </g>
    </svg>
  );
}

const X = <path d="M7 6l5 5M12 6l-5 5" stroke="#d22f2f" strokeWidth="1.800" />;
const VIEW_ICONS = [
  ["Detail level", <path d="M1 2h11v8H1z" fill="#f1f3f8" stroke="#777" strokeWidth="1" />],
  ["Visual style", <path d="M1 6l3-4h8v5l-3 4H1zM1 6h8v5M9 6l3-4" fill="#f4f4f4" strokeWidth="1" />],
  ["Sun path", <><circle cx="5" cy="6" r="2.500" fill="#ffe680" stroke="#d59a1a" /><path d="M5 1v2M5 9v2M0 6h2M1.500 2.500L3 4M8.500 2.500L7 4" stroke="#d59a1a" />{X}</>],
  ["Shadows", <><circle cx="5" cy="5" r="3.300" fill="#dcecf9" stroke="#3b87c8" /><path d="M3 11h5" strokeWidth="2" />{X}</>],
  ["Crop view", <><path d="M3 2v7h9M0 4h9v7" stroke="#3b78b8" strokeWidth="1.600" />{X}</>],
  ["Crop region", <><path d="M3 2v7h9M0 4h7v7" stroke="#3b78b8" strokeWidth="1.600" /><circle cx="9.500" cy="4" r="2" fill="#dcecf9" stroke="#3b87c8" /></>],
  ["Temporary hide", <path d="M1 4l3 4c1 2 4 1 4-1s-3-2-3 0M6 3l4-1c2 1 2 4 0 5s-3-1-2-2" strokeWidth="1" />],
  ["Reveal hidden", <><circle cx="6" cy="5" r="2" fill="#d7eaff" stroke="#3b87d8" /><path d="M6 7v3" stroke="#3b87d8" strokeWidth="1.600" /></>],
  ["Temporary properties", <><path d="M1 3h10v7H1z" fill="#fff" /><circle cx="8" cy="7" r="2" fill="#ddd" /><path d="M9.500 8.500L12 11" /></>],
  ["Analytical model", <><path d="M1 5h3V3h5v7H1zM4 5v5M1 7h8" fill="#fff" strokeWidth="1" /><path d="M1 10h3v2H1zM5 10h3v2H5z" fill="#c33" stroke="none" /><circle cx="10" cy="4" r="2" fill="#ffd23c" stroke="#d59a1a" /></>],
  ["Constraints", <><path d="M1 1v10M11 1v5M1 3h10" /><path d="M7 7h5v5H7z" fill="#777" /></>],
];

function DrawingView() {
  return (
    <main className="ml-1 grid min-w-0 flex-1 grid-cols-[minmax(0,1fr)_18px] grid-rows-[minmax(0,1fr)_18px] border-t border-l border-[#808080] bg-[#f0f0f0]">
      <div className="relative overflow-hidden bg-white">
        <Canvas />
        <div className="absolute top-1 right-[2px] flex items-center gap-1">
          <button aria-label="Minimize view"><svg width="9" height="9" viewBox="0 0 9 9" fill="#fff" stroke="#555" aria-hidden="true"><path d="M.5 5.500h8v2h-8z" /></svg></button>
          <button aria-label="Restore view"><svg width="8" height="8" viewBox="0 0 8 8" fill="#fff" stroke="#555" aria-hidden="true"><path d="M2.500.5h5v5h-5zM.5 2.500h5v5h-5zM2 5h2" /></svg></button>
          <button aria-label="Close view"><svg width="8" height="8" viewBox="0 0 8 8" fill="none" stroke="#555" aria-hidden="true"><path d="M.5.5h2l1.500 2 1.500-2h2L5.500 4l2 3.500h-2L4 5.500l-1.500 2h-2l2-3.500z" /></svg></button>
        </div>
        <div className="absolute top-[19px] right-0 flex h-[78px] w-[23px] flex-col items-center rounded-sm border border-[#c0c0c0] bg-[#f5f5f5]/90">
          <svg width="21" height="76" viewBox="0 0 21 76" fill="none" stroke="#a9a9a9" aria-hidden="true">
            <circle cx="17" cy="4" r="2" /><circle cx="9" cy="20" r="6" /><circle cx="9" cy="20" r="3" /><path d="M9 26h6v-6" />
            <path d="M8 34h4l-2 2z" fill="#888" stroke="none" /><path d="M2 38.500h17" /><path d="M5 45l8 8M13 45l-8 8" strokeDasharray="3 2" /><circle cx="13" cy="51" r="3" fill="#f5f5f5" /><path d="M15 53l2 2" />
            <path d="M8 62h4l-2 2z" fill="#888" stroke="none" /><circle cx="17" cy="72" r="2" />
          </svg>
          <span className="absolute top-[22px] right-[2px] bg-[#f5f5f5] text-[7px] leading-[8px] text-[#4f86c6]">2D</span>
        </div>
      </div>
      <div className="flex flex-col items-center">
        <button aria-label="Scroll up" className="flex h-[18px] items-center"><Chevron dir="up" /></button>
        <div className="h-[328px] shrink" />
        <div className="h-[17px] w-4 bg-[#cdcdcd]" />
        <button aria-label="Scroll down" className="mt-auto flex h-[18px] items-center"><Chevron dir="down" /></button>
      </div>
      <div className="flex items-center overflow-hidden text-[11px]">
        <button className="w-[82px] shrink-0 pl-4 text-left text-[#222]">3" = 1'-0"</button>
        <div className="flex shrink-0 gap-2">
          {VIEW_ICONS.map(([l, p]) => <button key={l} aria-label={l}><Icon size={13} box={13}>{p}</Icon></button>)}
        </div>
        <button aria-label="Scroll left" className="ml-1 flex w-[18px] justify-center"><Chevron dir="left" /></button>
        <div className="flex h-full flex-1">
          <span className="flex-1" />
          <span className="w-[17px] bg-[#cdcdcd]" />
          <span className="flex-1" />
        </div>
        <button aria-label="Scroll right" className="flex w-[18px] justify-center"><Chevron dir="right" /></button>
      </div>
      <div className="flex items-end justify-end p-[2px]"><Grip /></div>
    </main>
  );
}

const Grip = () => (
  <svg width="9" height="9" viewBox="0 0 9 9" fill="#b9b9b9" aria-hidden="true"><path d="M7 1h2v2H7zM7 4h2v2H7zM4 4h2v2H4zM7 7h2v2H7zM4 7h2v2H4zM1 7h2v2H1z" /></svg>
);

/* ---------- status bar ---------- */

const PTR = <path d="M6 4v8l2-2 1 3 1.500-.5-1-3H12z" fill="#fff" strokeWidth="1" />;
const RED = <path d="M8 1l4 4M12 1L8 5" stroke="#d22f2f" strokeWidth="1.500" />;
const SELECT_ICONS = [
  ["Select links", <><path d="M1 2h5v3H1zM6 2h5v3H6z" fill="#f7cf4e" stroke="#b8860b" />{PTR}</>],
  ["Select underlay elements", <><path d="M1 9l5-5h4M1 9h6" stroke="#3b87c8" strokeWidth="1.500" />{PTR}{RED}</>],
  ["Select pinned elements", <><path d="M2 1h6v4l1 2H1l1-2zM5 7v4" fill="#f0923c" stroke="#b65a14" />{PTR}</>],
  ["Select elements by face", <><path d="M1 3l5-1v9l-5-1z" fill="#cfe5f8" stroke="#3b87c8" />{PTR}{RED}</>],
  ["Drag elements on selection", <><path d="M4 0v8M0 4h8M2.500 1.500L4 0l1.500 1.500M2.500 6.500L4 8l1.500-1.500" strokeWidth="1" />{PTR}</>],
  ["Filter", <path d="M1 2h11L8 7v5l-3-1V7z" fill="#e4e6e9" />],
];

function StatusBar() {
  return (
    <footer className="flex h-4 shrink-0 items-center overflow-hidden border-t border-[#a5a5a5] bg-linear-to-b from-[#dedede] to-[#c4c4c4] text-[11px] text-[#222]">
      <span className="w-[745px] shrink truncate pt-[2px] leading-4">Generic Models : laser triangle : laser triangle</span>
      <button aria-label="Worksets" className="w-[17px] shrink-0"><Icon size={13} box={13}><path d="M1 5h5v6H1z" fill="#a8d2f0" stroke="#2f7ab8" /><path d="M8 6h4v5H8z" fill="#eee" /><path d="M3 4c0-3 6-3 7 0" stroke="#3a9a3a" strokeWidth="1.500" /></Icon></button>
      <span className="relative flex w-[137px] shrink-0 items-center">
        <select disabled aria-label="Active workset" className="h-4 w-full appearance-none bg-white" defaultValue=""><option value=""></option></select>
        <span className="pointer-events-none absolute right-1"><Chevron dir="down" color="#aaa" /></span>
      </span>
      <button className="flex w-[41px] shrink-0 items-center gap-[3px] pl-1 text-[12px]"><Icon size={13} box={13} className="opacity-50"><circle cx="7" cy="4" r="3" fill="#eee" /><path d="M5 7l-3 5h5" /></Icon>:0</button>
      <button aria-label="Design options" className="w-[17px] shrink-0"><Icon size={13} box={13}><path d="M1 1h10v10H1z" fill="#eee" /><path d="M1 2h10" strokeWidth="2" /><path d="M4 6h1M6 6h4M4 9h1M6 9h4" /></Icon></button>
      <button aria-label="Add to set" className="w-[17px] shrink-0"><Icon size={13} box={13} className="opacity-60"><path d="M2 1h9v10H2z" fill="#999" /><path d="M0 8h6M4 6l3 2-3 2" stroke="#fff" /></Icon></button>
      <span className="relative flex w-[104px] shrink-0 items-center">
        <select disabled aria-label="Design option" className="h-4 w-full appearance-none bg-white px-[2px] pt-[2px] text-[12px] text-[#8c8c8c] opacity-100"><option>Main Model</option></select>
        <span className="pointer-events-none absolute right-1"><Chevron dir="down" color="#aaa" /></span>
      </span>
      <div className="ml-auto flex shrink-0 items-center gap-1">
        {SELECT_ICONS.map(([l, p]) => <button key={l} aria-label={l}><Icon size={13} box={13}>{p}</Icon></button>)}
        <span className="w-[62px] pt-[2px]">:0</span>
      </div>
      <Grip />
    </footer>
  );
}

export default function App() {
  return (
    <div className="flex h-screen flex-col overflow-hidden bg-[#efc568] px-[6px] pb-[6px] font-['Open_Sans','Noto_Sans',sans-serif] text-[12px] leading-4 shadow-[inset_0_0_0_1px_#b3924b]">
      <TitleBar />
      <div className="flex min-h-0 flex-1 flex-col border-r border-l border-[#8d8d8d] bg-[#e0e1e3]">
        <Ribbon />
        <div className="mt-[27px] flex min-h-0 flex-1">
          <Browser />
          <Properties />
          <DrawingView />
        </div>
        <StatusBar />
      </div>
    </div>
  );
}
